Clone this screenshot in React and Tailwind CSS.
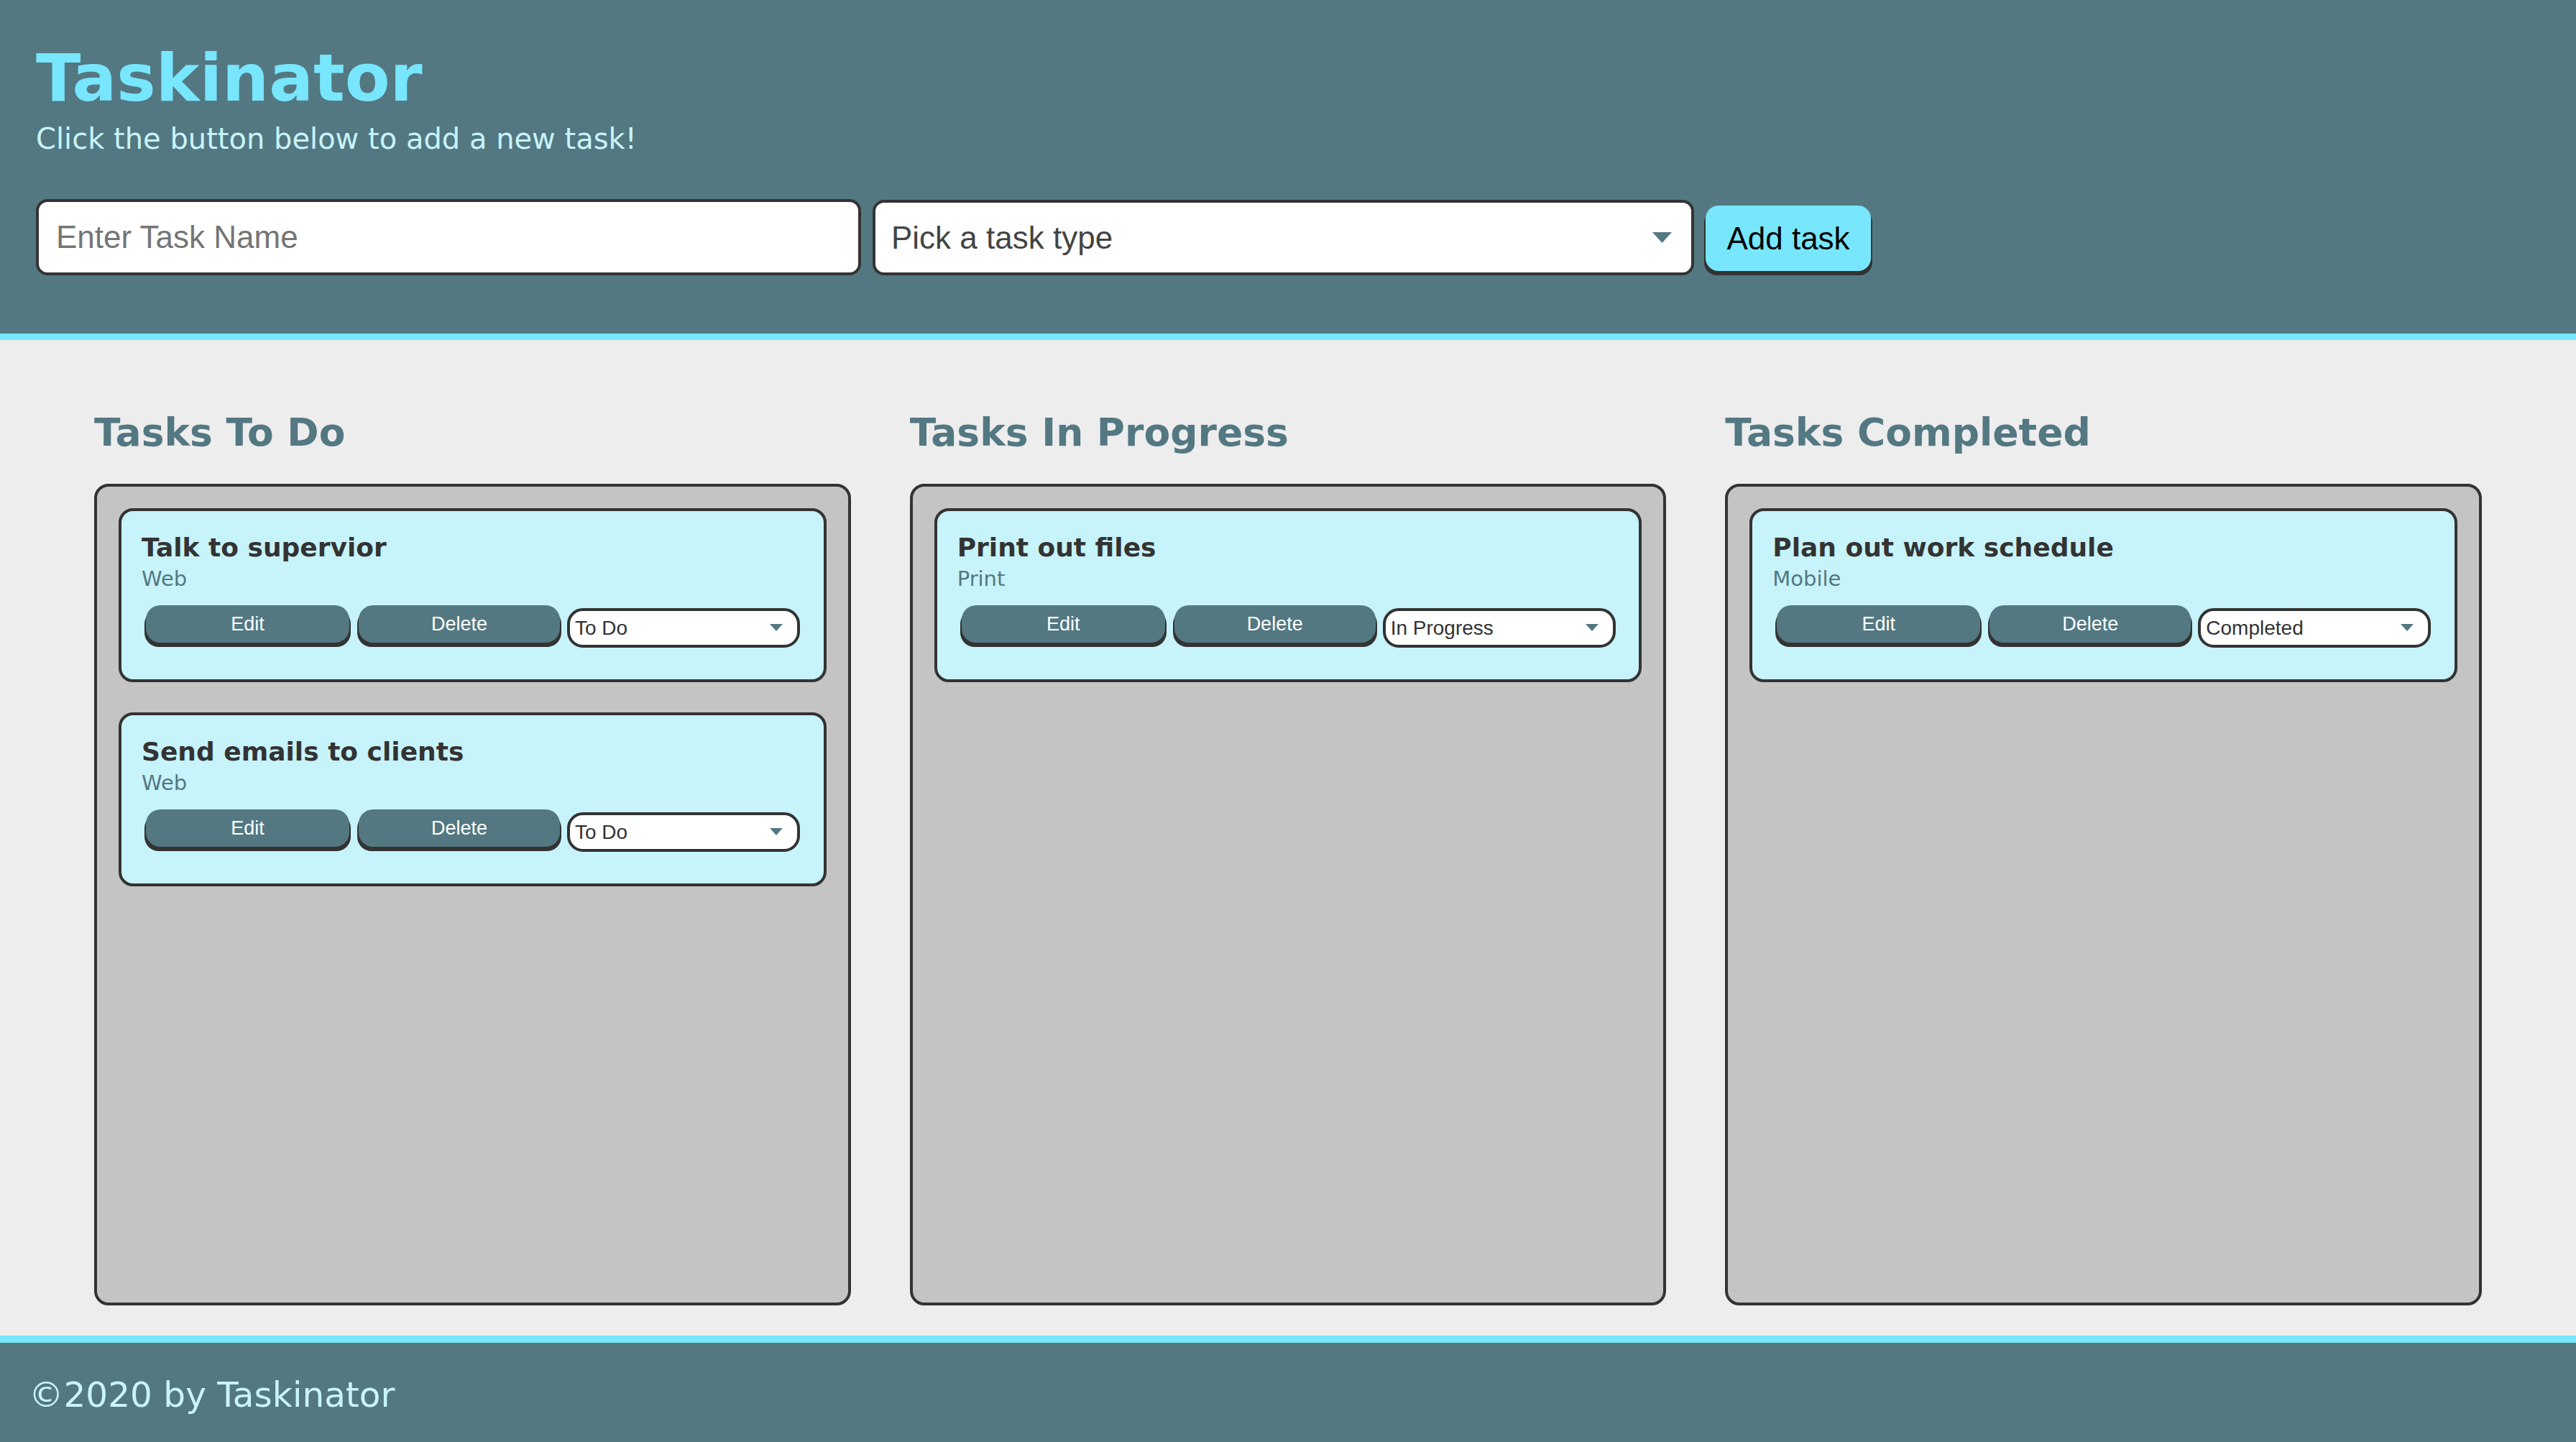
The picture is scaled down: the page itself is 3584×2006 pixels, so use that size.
import React, { useState } from "react";

const initialColumns = [
  {
    id: "todo",
    title: "Tasks To Do",
    tasks: [
      { id: 1, name: "Talk to supervior", type: "Web", status: "To Do" },
      { id: 2, name: "Send emails to clients", type: "Web", status: "To Do" },
    ],
  },
  {
    id: "progress",
    title: "Tasks In Progress",
    tasks: [{ id: 3, name: "Print out files", type: "Print", status: "In Progress" }],
  },
  {
    id: "done",
    title: "Tasks Completed",
    tasks: [{ id: 4, name: "Plan out work schedule", type: "Mobile", status: "Completed" }],
  },
];

const Arrow = ({ className }) => (
  <svg className={className} viewBox="0 0 18 10" aria-hidden="true">
    <path d="M0 0 H18 L9 10 Z" fill="#537882" />
  </svg>
);

const TaskCard = ({ task }) => {
  return (
    <div className="bg-[#c7f3fa] border-4 border-[#333] rounded-[20px] px-[28px] pt-[31px] pb-[44px]">
      <h3 className="text-[36px] leading-[40px] font-bold text-[#333]">{task.name}</h3>
      <p className="mt-[6px] text-[29px] leading-[34px] text-[#537882]">{task.type}</p>
      <div className="mt-[20px] flex items-start [font-family:'Liberation_Sans',Arial,sans-serif]">
        <button className="ml-[6px] w-[283px] h-[52px] rounded-[20px] bg-[#537882] text-white text-[27px] shadow-[2px_6px_0_#333,-2px_6px_0_#333]">
          Edit
        </button>
        <button className="ml-[13px] w-[280px] h-[52px] rounded-[20px] bg-[#537882] text-white text-[27px] shadow-[2px_6px_0_#333,-2px_6px_0_#333]">
          Delete
        </button>
        <div className="relative ml-[10px] mt-[4px] w-[324px] h-[55px]">
          <select
            defaultValue={task.status}
            className="appearance-none w-full h-full bg-white border-4 border-[#333] rounded-[22px] pl-[7px] text-[28px] text-[#333] outline-none"
          >
            <option>To Do</option>
            <option>In Progress</option>
            <option>Completed</option>
          </select>
          <Arrow className="absolute right-[24px] top-[22px] w-[18px] h-[10px] pointer-events-none" />
        </div>
      </div>
    </div>
  );
};

export default function App() {
  const [columns] = useState(initialColumns);
  const [taskName, setTaskName] = useState("");
  const [taskType, setTaskType] = useState("");

  return (
    <div className="[font-family:'DejaVu_Sans',Verdana,sans-serif]">
      {/* header + form */}
      <header className="bg-[#537882] border-b-[9px] border-[#78e6fc] px-[50px] pt-[64px] pb-[81px]">
        <h1 className="text-[91.5px] leading-[90px] font-bold text-[#78e6fc]">Taskinator</h1>
        <p className="mt-[15px] text-[40px] leading-[48px] text-[#c8f4fa]">Click the button below to add a new task!</p>
        <form
          className="mt-[60px] flex items-start [font-family:'Liberation_Sans',Arial,sans-serif]"
          onSubmit={(e) => e.preventDefault()}
        >
          <input
            type="text"
            value={taskName}
            onChange={(e) => setTaskName(e.target.value)}
            placeholder="Enter Task Name"
            className="w-[1148px] h-[106px] bg-white border-4 border-[#333] rounded-[16px] pl-[24px] text-[44px] text-[#333] placeholder:text-[#757575] outline-none"
          />
          <div className="relative ml-[16px] mt-[1px] w-[1143px] h-[105px]">
            <select
              value={taskType}
              onChange={(e) => setTaskType(e.target.value)}
              className="appearance-none w-full h-full bg-white border-4 border-[#333] rounded-[16px] pl-[22px] text-[44px] text-[#444] outline-none"
            >
              <option value="" disabled>
                Pick a task type
              </option>
              <option>Web</option>
              <option>Mobile</option>
              <option>Print</option>
            </select>
            <Arrow className="absolute right-[30px] top-[45px] w-[29px] h-[15px] pointer-events-none" />
          </div>
          <button
            type="submit"
            className="ml-[16px] mt-[9px] w-[230px] h-[91px] rounded-[18px] bg-[#78e6fc] text-black text-[44px] shadow-[2px_6px_0_#333,-2px_6px_0_#333]"
          >
            Add task
          </button>
        </form>
      </header>

      {/* task columns */}
      <main className="bg-[#ededed] px-[131px] pt-[99px] pb-[42px] grid grid-cols-3 gap-x-[82px]">
        {columns.map((col) => (
          <section key={col.id}>
            <h2 className="text-[53.5px] leading-[60px] font-bold text-[#537882]">{col.title}</h2>
            <div className="mt-[41px] h-[1143px] bg-[#c4c4c4] border-4 border-[#333] rounded-[20px] px-[30px] pt-[30px] flex flex-col gap-[42px]">
              {col.tasks.map((task) => (
                <TaskCard key={task.id} task={task} />
              ))}
            </div>
          </section>
        ))}
      </main>

      <footer className="bg-[#537882] border-t-[10px] border-[#78e6fc] px-[40px] pt-[44px] pb-[38px]">
        <p className="text-[48.5px] leading-[56px] text-[#c8f4fa]">©2020 by Taskinator</p>
      </footer>
    </div>
  );
}
